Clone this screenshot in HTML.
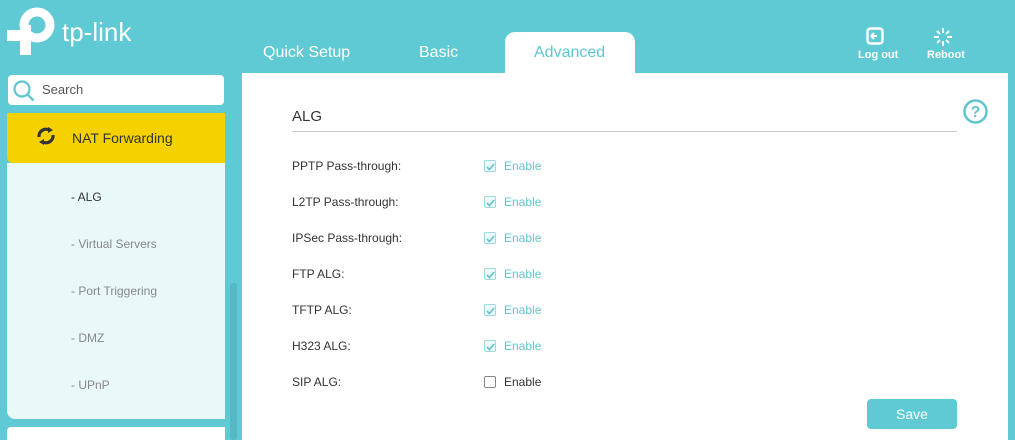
<!DOCTYPE html>
<html><head><style>
*{margin:0;padding:0;box-sizing:border-box}
body{width:1015px;height:440px;background:#5fcad4;font-family:"Liberation Sans",sans-serif;position:relative;overflow:hidden}
.a{position:absolute}
.tab{position:absolute;top:44px;color:#fff;font-size:16px}
.row{position:absolute;left:292px;font-size:12px;color:#333}
.cb{position:absolute;left:484px;width:12px;height:12px;border:1px solid #9fd9de;border-radius:2px;background:#eef9fa}
.cb svg{position:absolute;left:1px;top:1px}
.en{position:absolute;left:504px;font-size:12px;color:#5fc6d0}
.sub{position:absolute;left:71px;font-size:12px;color:#888}
</style></head><body>
<svg class="a" style="left:0;top:0" width="60" height="60" viewBox="0 0 60 60"><circle cx="37" cy="25" r="13" fill="none" stroke="#fff" stroke-width="9"/><rect x="20" y="25" width="11" height="30" fill="#fff"/><rect x="7" y="30" width="24" height="11" fill="#fff"/></svg>
<div class="a" style="left:62px;top:17px;color:#fff;font-size:26px">tp-link</div>
<div class="tab" style="left:263px">Quick Setup</div>
<div class="tab" style="left:419px">Basic</div>
<div class="a" style="left:505px;top:32px;width:130px;height:45px;background:#fff;border-radius:10px 10px 0 0"></div>
<div class="tab" style="left:534px;color:#5fc6d0">Advanced</div>
<svg class="a" style="left:866px;top:27px" width="18" height="18" viewBox="0 0 18 18"><rect x="1.5" y="1.5" width="15" height="15" rx="3" fill="none" stroke="#fff" stroke-width="2.4"/><path d="M5 9h6M5 9l3-3M5 9l3 3" stroke="#fff" stroke-width="2" fill="none"/></svg>
<div class="a" style="left:858px;top:49px;color:#fff;font-size:11px;font-weight:bold">Log out</div>
<svg class="a" style="left:933px;top:27px" width="20" height="20" viewBox="0 0 20 20" stroke="#fff" stroke-width="2"><path d="M10 1v5M10 14v5M1 10h5M14 10h5M4 4l3 3M13 13l3 3M16 4l-3 3M4 16l3-3"/></svg>
<div class="a" style="left:927px;top:49px;color:#fff;font-size:11px;font-weight:bold">Reboot</div>
<div class="a" style="left:242px;top:73px;width:766px;height:367px;background:#fff"></div>
<div class="a" style="left:292px;top:108px;font-size:15px;color:#333">ALG</div>
<div class="a" style="left:292px;top:131px;width:665px;height:1px;background:#ccc"></div>
<svg class="a" style="left:963px;top:99px" width="25" height="25" viewBox="0 0 25 25"><circle cx="12.5" cy="12.5" r="11" fill="none" stroke="#5fc6d0" stroke-width="2.5"/><text x="12.5" y="18" text-anchor="middle" font-size="16" font-weight="bold" fill="#5fc6d0" font-family="Liberation Sans">?</text></svg>
<div class="row" style="top:159px">PPTP Pass-through:</div>
<div class="row" style="top:195px">L2TP Pass-through:</div>
<div class="row" style="top:231px">IPSec Pass-through:</div>
<div class="row" style="top:267px">FTP ALG:</div>
<div class="row" style="top:303px">TFTP ALG:</div>
<div class="row" style="top:339px">H323 ALG:</div>
<div class="row" style="top:375px">SIP ALG:</div>
<div class="cb" style="top:160px"><svg width="9" height="9"><path d="M1 5l2.5 2.5L8 2" stroke="#5fc6d0" stroke-width="1.6" fill="none"/></svg></div>
<div class="cb" style="top:196px"><svg width="9" height="9"><path d="M1 5l2.5 2.5L8 2" stroke="#5fc6d0" stroke-width="1.6" fill="none"/></svg></div>
<div class="cb" style="top:232px"><svg width="9" height="9"><path d="M1 5l2.5 2.5L8 2" stroke="#5fc6d0" stroke-width="1.6" fill="none"/></svg></div>
<div class="cb" style="top:268px"><svg width="9" height="9"><path d="M1 5l2.5 2.5L8 2" stroke="#5fc6d0" stroke-width="1.6" fill="none"/></svg></div>
<div class="cb" style="top:304px"><svg width="9" height="9"><path d="M1 5l2.5 2.5L8 2" stroke="#5fc6d0" stroke-width="1.6" fill="none"/></svg></div>
<div class="cb" style="top:340px"><svg width="9" height="9"><path d="M1 5l2.5 2.5L8 2" stroke="#5fc6d0" stroke-width="1.6" fill="none"/></svg></div>
<div class="cb" style="top:376px;border-color:#888;background:#fff"></div>
<div class="en" style="top:159px">Enable</div>
<div class="en" style="top:195px">Enable</div>
<div class="en" style="top:231px">Enable</div>
<div class="en" style="top:267px">Enable</div>
<div class="en" style="top:303px">Enable</div>
<div class="en" style="top:339px">Enable</div>
<div class="en" style="top:375px;color:#333">Enable</div>
<div class="a" style="left:867px;top:399px;width:90px;height:30px;background:#5fcad4;border-radius:4px;color:#fff;font-size:14px;text-align:center;line-height:30px">Save</div>
<div class="a" style="left:8px;top:75px;width:216px;height:30px;background:#fff;border-radius:4px"></div>
<svg class="a" style="left:12px;top:79px" width="24" height="24" viewBox="0 0 24 24"><circle cx="10" cy="10" r="7.5" fill="none" stroke="#5fc6d0" stroke-width="2.2"/><path d="M15.5 15.5l6 6" stroke="#5fc6d0" stroke-width="2.4"/></svg>
<div class="a" style="left:42px;top:82px;font-size:13px;color:#555">Search</div>
<div class="a" style="left:7px;top:113px;width:218px;height:50px;background:#f5d100;border-radius:0 0 0 6px"></div>
<svg class="a" style="left:36px;top:126px" width="20" height="20" viewBox="0 0 20 20"><path d="M3 11a7 7 0 0 1 11-6.5M17 9a7 7 0 0 1-11 6.5" fill="none" stroke="#333" stroke-width="3.2"/><path d="M12 1l5 3-5 3zM8 19l-5-3 5-3z" fill="#333"/></svg>
<div class="a" style="left:72px;top:130px;font-size:14px;color:#333">NAT Forwarding</div>
<div class="a" style="left:7px;top:163px;width:218px;height:256px;background:#e9f8f9;border-radius:0 0 0 8px"></div>
<div class="sub" style="top:190px;color:#333">- ALG</div>
<div class="sub" style="top:237px">- Virtual Servers</div>
<div class="sub" style="top:284px">- Port Triggering</div>
<div class="sub" style="top:331px">- DMZ</div>
<div class="sub" style="top:378px">- UPnP</div>
<div class="a" style="left:7px;top:427px;width:218px;height:13px;background:#fff;border-radius:4px 0 0 0"></div>
<div class="a" style="left:230px;top:283px;width:7px;height:157px;background:#54b9c2;border-radius:3px"></div>
</body></html>
